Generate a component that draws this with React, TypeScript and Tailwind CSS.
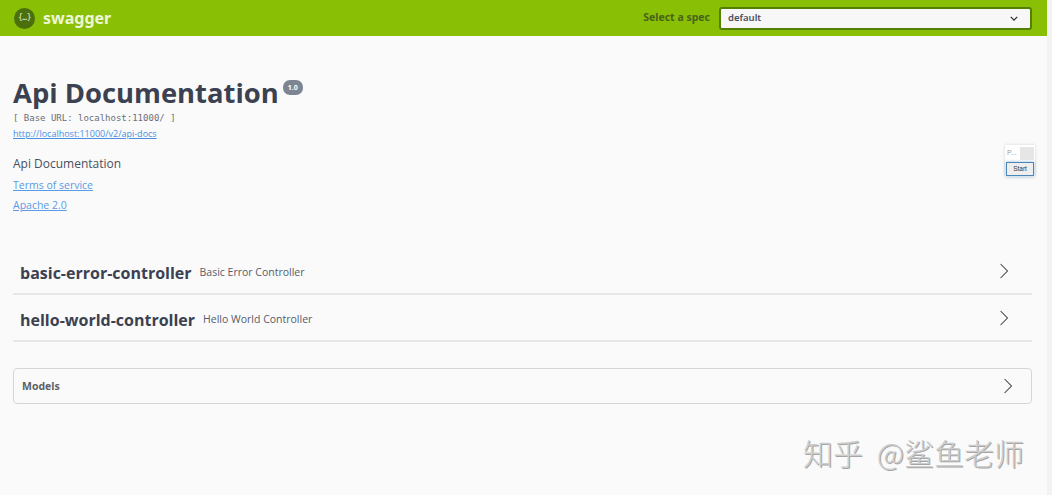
import React from 'react';

const Chevron = ({ className }: { className: string }) => (
    <svg viewBox="0 0 20 20" className={className} fill="currentColor">
        <path d="M13.25 10 6.11 2.86a.5.5 0 0 1 .7-.7l7.5 7.5a.5.5 0 0 1 0 .7l-7.5 7.5a.5.5 0 0 1-.7-.7z" />
    </svg>
);

const Tag = ({ name, desc }: { name: string; desc: string }) => (
    <div className="flex h-[47px] items-center justify-between border-b-2 border-[#e6e7e8] pl-[7px] pr-[19px]">
        <div className="flex items-center gap-[8px] pt-[4px]">
            <span className="text-[16px] font-bold text-[#3b4151]">{name}</span>
            <span className="text-[10.5px] text-[#565c6a]">{desc}</span>
        </div>
        <Chevron className="h-[18px] w-[18px] text-[#303030]" />
    </div>
);

export default function App() {
    return (
        <div className="relative h-[495px] w-[1052px] overflow-hidden bg-[#fafafa] font-['Open_Sans',sans-serif]">
            <header className="flex h-9 items-center justify-between bg-[#89bf04] pl-[14px] pr-[20px]">
                <div className="flex items-center gap-[8px]">
                    <div className="flex h-[21px] w-[21px] items-center justify-center rounded-full bg-[#4a6f0c] font-['DejaVu_Sans_Mono',monospace] text-[8px] leading-none tracking-[-0.5px] text-[#e4f0c8]">
                        {'{…}'}
                    </div>
                    <span className="font-['Noto_Sans',sans-serif] text-[16px] font-bold leading-none text-[#eef6d8]">swagger</span>
                </div>
                <div className="flex items-center gap-[9px]">
                    <span className="font-['Noto_Sans',sans-serif] text-[10.5px] font-bold text-[#48641a]">Select a spec</span>
                    <div className="flex h-[23px] w-[313px] items-center justify-between rounded-[3px] border-2 border-[#547f00] bg-[#f7f7f7] pl-[7px] pr-[12px]">
                        <span className="font-['Noto_Sans',sans-serif] text-[9.5px] font-semibold text-[#4a4f5e]">default</span>
                        <svg viewBox="0 0 10 6" className="h-[5px] w-[8px]" fill="none" stroke="#303030" strokeWidth="1.6">
                            <path d="M1 1l4 4 4-4" />
                        </svg>
                    </div>
                </div>
            </header>

            <main className="w-[1032px] pl-[13px]">
                <div className="mt-[39px] flex items-start">
                    <h1 className="text-[27.4px] font-bold leading-[36px] text-[#3b4151]">Api Documentation</h1>
                    <span className="ml-[4px] mt-[5px] rounded-[7px] bg-[#7d8492] px-[5px] py-[2px] text-[7px] font-bold leading-[11px] text-white">1.0</span>
                </div>
                <p className="mt-[1px] font-['DejaVu_Sans_Mono',monospace] text-[9px] leading-[12px] text-[#6b6f78]">[ Base URL: localhost:11000/ ]</p>
                <a className="mt-[4px] block text-[9px] leading-[12px] text-[#4990e2] underline">http://localhost:11000/v2/api-docs</a>
                <p className="mt-[16px] text-[12px] leading-[16px] text-[#4a4f5c]">Api Documentation</p>
                <a className="mt-[6px] block text-[10.5px] leading-[15px] text-[#5a9be6] underline">Terms of service</a>
                <a className="mt-[5px] block text-[10.5px] leading-[15px] text-[#5a9be6] underline">Apache 2.0</a>

                <section className="mt-[35px]">
                    <Tag name="basic-error-controller" desc="Basic Error Controller" />
                    <Tag name="hello-world-controller" desc="Hello World Controller" />
                </section>

                <div className="mt-[26px] flex h-9 items-center justify-between rounded-[4px] border border-[#d5d6d8] pl-[8px] pr-[14px]">
                    <span className="pt-[2px] text-[10.5px] font-bold text-[#5f6164]">Models</span>
                    <Chevron className="h-[18px] w-[18px] text-[#303030]" />
                </div>
            </main>

            <div className="absolute right-0 top-0 h-full w-[5px] bg-[#f2f2f2]" />

            <div className="absolute left-[1005px] top-[145px] w-[30px] bg-white pb-[1px] shadow-[0_0_3px_rgba(0,0,0,0.15)]">
                <div className="flex h-[17px] items-center justify-between pl-[2px] pr-[1px]">
                    <span className="font-['Liberation_Sans',sans-serif] text-[7px] text-[#a0a0a0]">P...</span>
                    <span className="h-[13px] w-[14px] bg-[#e6e6e6]" />
                </div>
                <button className="mx-auto block h-[14px] w-[28px] border border-[#4a86b8] bg-[#eeeeee] font-['Liberation_Sans',sans-serif] text-[6.5px] leading-none text-[#333] shadow-[0_0_3px_rgba(74,134,184,0.6)]">Start</button>
            </div>

            <div className="absolute left-[803px] top-[431px] font-['Noto_Sans_CJK_SC',sans-serif] text-[30px] font-light leading-[42px] text-[#cdcdcd] [text-shadow:1px_1px_0_#a5a5a5] [word-spacing:7px]">
                知乎 @鲨鱼老师
            </div>
        </div>
    );
}
